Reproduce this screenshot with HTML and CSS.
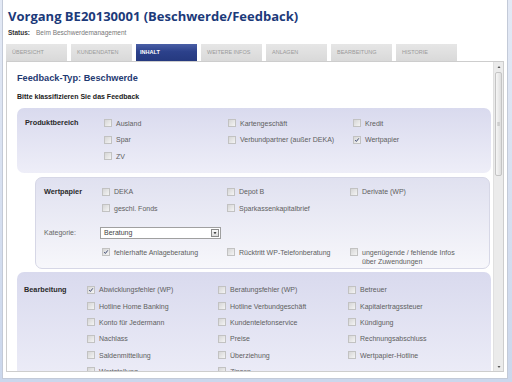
FILE: index.html
```html
<!DOCTYPE html>
<html>
<head>
<meta charset="utf-8">
<link rel="stylesheet" href="styles.css">
</head>
<body>
<div class="window">
  <h1 class="title">Vorgang BE20130001 (Beschwerde/Feedback)</h1>
  <div class="status"><b>Status:</b><span>Beim Beschwerdemanagement</span></div>
  <div class="tabs">
    <div class="tab">Übersicht</div>
    <div class="tab">Kundendaten</div>
    <div class="tab active">Inhalt</div>
    <div class="tab">Weitere Infos</div>
    <div class="tab">Anlagen</div>
    <div class="tab">Bearbeitung</div>
    <div class="tab">Historie</div>
  </div>
  <div class="panel">
    <div class="content">
      <h2 class="heading">Feedback-Typ: Beschwerde</h2>
      <p class="intro">Bitte klassifizieren Sie das Feedback</p>

      <div class="box produkt">
        <div class="label">Produktbereich</div>
        <div class="grid">
          <div class="item"><i class="cb"></i>Ausland</div>
          <div class="item"><i class="cb"></i>Kartengeschäft</div>
          <div class="item"><i class="cb"></i>Kredit</div>
          <div class="item"><i class="cb"></i>Spar</div>
          <div class="item"><i class="cb"></i>Verbundpartner (außer DEKA)</div>
          <div class="item"><i class="cb on"><svg viewBox="0 0 8 8"><path d="M1.6 4.2 L3.2 5.9 L6.4 1.8"/></svg></i>Wertpapier</div>
          <div class="item"><i class="cb"></i>ZV</div>
        </div>
      </div>

      <div class="box sub">
        <div class="subtop">
          <div class="label">Wertpapier</div>
          <div class="grid">
            <div class="item"><i class="cb"></i>DEKA</div>
            <div class="item"><i class="cb"></i>Depot B</div>
            <div class="item"><i class="cb"></i>Derivate (WP)</div>
            <div class="item"><i class="cb"></i>geschl. Fonds</div>
            <div class="item"><i class="cb"></i>Sparkassenkapitalbrief</div>
          </div>
        </div>
        <div class="kategorie">
          <span class="klabel">Kategorie:</span>
          <div class="select"><span>Beratung</span><i class="sbtn"><svg viewBox="0 0 8 8"><path d="M2 3 L6 3 L4 5.4 Z"/></svg></i></div>
        </div>
        <div class="grid lower">
          <div class="item"><i class="cb on"><svg viewBox="0 0 8 8"><path d="M1.6 4.2 L3.2 5.9 L6.4 1.8"/></svg></i>fehlerhafte Anlageberatung</div>
          <div class="item"><i class="cb"></i>Rücktritt WP-Telefonberatung</div>
          <div class="item"><i class="cb"></i><span>ungenügende / fehlende Infos<br>über Zuwendungen</span></div>
        </div>
      </div>

      <div class="box bearb">
        <div class="label">Bearbeitung</div>
        <div class="grid">
          <div class="item"><i class="cb on"><svg viewBox="0 0 8 8"><path d="M1.6 4.2 L3.2 5.9 L6.4 1.8"/></svg></i>Abwicklungsfehler (WP)</div>
          <div class="item"><i class="cb"></i>Beratungsfehler (WP)</div>
          <div class="item"><i class="cb"></i>Betreuer</div>
          <div class="item"><i class="cb"></i>Hotline Home Banking</div>
          <div class="item"><i class="cb"></i>Hotline Verbundgeschäft</div>
          <div class="item"><i class="cb"></i>Kapitalertragssteuer</div>
          <div class="item"><i class="cb"></i>Konto für Jedermann</div>
          <div class="item"><i class="cb"></i>Kundentelefonservice</div>
          <div class="item"><i class="cb"></i>Kündigung</div>
          <div class="item"><i class="cb"></i>Nachlass</div>
          <div class="item"><i class="cb"></i>Preise</div>
          <div class="item"><i class="cb"></i>Rechnungsabschluss</div>
          <div class="item"><i class="cb"></i>Saldenmitteilung</div>
          <div class="item"><i class="cb"></i>Überziehung</div>
          <div class="item"><i class="cb"></i>Wertpapier-Hotline</div>
          <div class="item"><i class="cb"></i>Wertstellung</div>
          <div class="item"><i class="cb"></i>Zinsen</div>
        </div>
      </div>
    </div>
    <div class="scrollbar">
      <div class="sarrow"><svg viewBox="0 0 8 8"><path d="M2.5 5 L5.5 5 L4 3 Z"/></svg></div>
      <div class="strack">
        <div class="thumb"><svg viewBox="0 0 6 6"><path d="M1.5 1.5 H4.5 M1.5 3 H4.5 M1.5 4.5 H4.5"/></svg></div>
      </div>
      <div class="sarrow"><svg viewBox="0 0 8 8"><path d="M2.5 3 L5.5 3 L4 5 Z"/></svg></div>
    </div>
  </div>
</div>
</body>
</html>
```

FILE: styles.css
```css
html, body {
  margin: 0;
  padding: 0;
}
body {
  width: 512px;
  height: 382px;
  overflow: hidden;
  background: linear-gradient(180deg, #e3e9f5 0%, #cbd7ec 100%);
  font-family: "Liberation Sans", Arial, sans-serif;
}
.window {
  margin-left: 2px;
  width: 506px;
  height: 379px;
  box-sizing: border-box;
  border: 1px solid #c3cad8;
  border-top: none;
  background: #fff;
  padding: 0 0 0 3px;
  overflow: hidden;
}
.title {
  margin: 8px 0 0 2px;
  font-family: "Open Sans", "Liberation Sans", sans-serif;
  font-weight: 700;
  font-size: 13px;
  line-height: 16px;
  color: #1c3a7a;
  white-space: nowrap;
}
.status {
  margin: 4px 0 0 2px;
  font-size: 6.5px;
  line-height: 10px;
  color: #777;
  display: flex;
  gap: 6px;
}
.status b {
  color: #333;
}
.tabs {
  margin-top: 6px;
  display: flex;
  gap: 4px;
  height: 17px;
}
.tab {
  width: 61px;
  height: 17px;
  box-sizing: border-box;
  padding-left: 6px;
  background: linear-gradient(180deg, #e6e6e6, #d9d9d9);
  color: #9a9a9a;
  font-size: 5.5px;
  line-height: 17px;
  text-transform: uppercase;
  white-space: nowrap;
}
.tab.active {
  background: linear-gradient(180deg, #4a5fa6 0%, #2c418b 45%, #25397f 100%);
  color: #fff;
  font-weight: 700;
  padding-left: 4px;
}
.panel {
  width: 498px;
  height: 311px;
  box-sizing: border-box;
  border: 1px solid #cdcdcd;
  display: flex;
  background: #fff;
}
.content {
  flex: 1;
  overflow: hidden;
  padding: 10px 0 0 10px;
  min-width: 0;
}
.heading {
  margin: 0;
  font-size: 9.2px;
  line-height: 12px;
  font-weight: 700;
  color: #1f3a72;
}
.intro {
  margin: 8px 0 0 0;
  font-size: 7px;
  line-height: 10px;
  font-weight: 700;
  color: #222;
}
.box {
  border-radius: 7px;
  background: linear-gradient(180deg, #d9daee 0%, #eeeef8 100%);
  display: flex;
}
.produkt {
  margin: 6px 2px 0 0;
  padding: 7px 0 8px 8px;
}
.label {
  font-size: 7.3px;
  font-weight: 700;
  color: #2a2a2a;
  line-height: 16.5px;
  flex: none;
}
.produkt .label {
  width: 79px;
}
.grid {
  display: grid;
  grid-auto-rows: 16.5px;
  flex: 1;
}
.produkt .grid {
  grid-template-columns: 124px 125px 1fr;
}
.item {
  display: flex;
  align-items: center;
  gap: 4px;
  font-size: 7px;
  color: #606060;
  white-space: nowrap;
}
.cb {
  flex: none;
  width: 8px;
  height: 8px;
  box-sizing: border-box;
  border: 1px solid #c2c2c2;
  background: linear-gradient(135deg, #d6d6d6 0%, #f4f4f4 100%);
  display: flex;
  align-items: center;
  justify-content: center;
}
.cb svg {
  width: 8px;
  height: 8px;
  fill: none;
  stroke: #3a4670;
  stroke-width: 1.3;
}
.sub {
  margin: 4px 3px 0 18px;
  padding: 6px 0 2px 8px;
  border: 1px solid #d6d7e6;
  background: linear-gradient(180deg, #e0e1f0 0%, #f7f7fb 100%);
  flex-direction: column;
}
.subtop {
  display: flex;
}
.sub .label {
  width: 58px;
}
.sub .grid {
  grid-template-columns: 125px 123px 1fr;
}
.kategorie {
  display: flex;
  align-items: center;
  margin-top: 10px;
  height: 12px;
}
.klabel {
  width: 56px;
  font-size: 7px;
  color: #666;
}
.select {
  width: 121px;
  height: 12px;
  box-sizing: border-box;
  border: 1px solid #a0a0a0;
  background: #fff;
  display: flex;
  align-items: center;
  justify-content: space-between;
  padding: 0 1px 0 3px;
  font-size: 7px;
  color: #444;
}
.sbtn {
  width: 8px;
  height: 8px;
  box-sizing: border-box;
  border: 1px solid #8a8a8a;
  background: linear-gradient(180deg, #fafafa, #dcdcdc);
  display: flex;
}
.sbtn svg {
  width: 6px;
  height: 6px;
  fill: #111;
}
.grid.lower {
  margin: 9px 0 0 58px;
  grid-auto-rows: auto;
}
.grid.lower .item {
  align-items: flex-start;
  line-height: 9px;
}
.grid.lower .cb {
  margin-top: 0.5px;
}
.bearb {
  margin: 3px 2px 0 0;
  padding: 10px 0 8px 7px;
}
.bearb .label {
  width: 63px;
  line-height: 16.35px;
}
.bearb .grid {
  grid-template-columns: 131px 130px 1fr;
  grid-auto-rows: 16.35px;
}
.scrollbar {
  flex: none;
  width: 9px;
  background: #ebebeb;
  border-left: 1px solid #e0e0e0;
  display: flex;
  flex-direction: column;
}
.sarrow {
  height: 9px;
  flex: none;
  display: flex;
  align-items: center;
  justify-content: center;
}
.sarrow svg {
  width: 8px;
  height: 8px;
  fill: #555;
}
.strack {
  flex: 1;
  padding-top: 1px;
}
.thumb {
  height: 104px;
  margin: 0 1px;
  box-sizing: border-box;
  border: 1px solid #c4c4c4;
  border-radius: 2px;
  background: linear-gradient(90deg, #f6f6f6, #dedede);
  display: flex;
  align-items: center;
  justify-content: center;
}
.thumb svg {
  width: 6px;
  height: 6px;
  fill: none;
  stroke: #999;
  stroke-width: 0.6;
}
```
